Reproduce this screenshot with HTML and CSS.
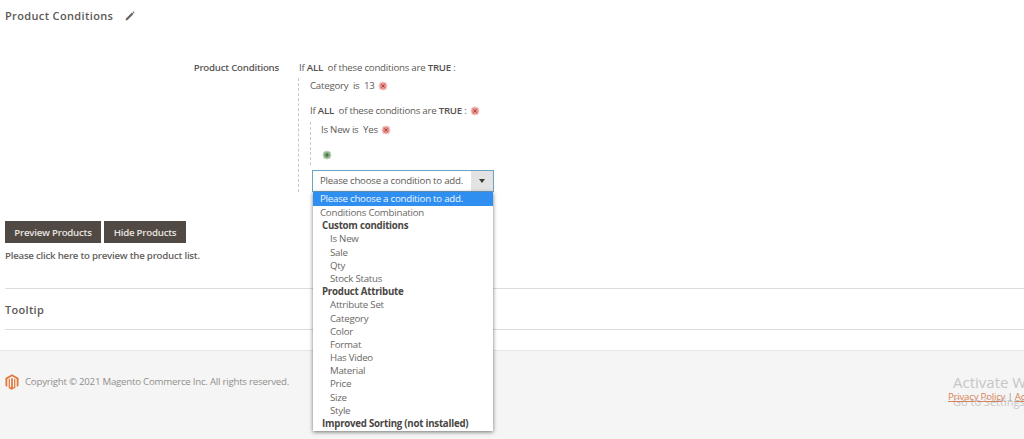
FILE: index.html
```html
<!DOCTYPE html>
<html lang="en">
<head>
<meta charset="utf-8">
<title>Product Conditions</title>
<link rel="stylesheet" href="styles.css">
</head>
<body>
<main class="content">
  <h2 class="section-title">Product Conditions
    <svg class="pencil" viewBox="0 0 10 10" width="10" height="10"><path d="M0.5 9.5 L1 7.4 L6.9 1.5 L8.5 3.1 L2.6 9 Z M7.5 0.9 L8.2 0.3 L9.7 1.8 L9.1 2.5 Z" fill="#6a6560"/></svg>
  </h2>
  <div class="field">
    <div class="field-label">Product Conditions</div>
    <div class="rules">
      <div class="rule-head">If <b>ALL</b>&nbsp; of these conditions are <b>TRUE</b> :</div>
      <div class="rule-group outer">
        <div class="rule-row first">Category&nbsp; is&nbsp; 13 <svg class="icon" viewBox="0 0 10 10"><use href="#rm"/></svg></div>
        <div class="rule-row second">If <b>ALL</b>&nbsp; of these conditions are <b>TRUE</b> : <svg class="icon" viewBox="0 0 10 10"><use href="#rm"/></svg></div>
        <div class="rule-group inner">
          <div class="rule-row">Is New is&nbsp; Yes <svg class="icon" viewBox="0 0 10 10"><use href="#rm"/></svg></div>
          <div class="add-row"><svg class="icon" viewBox="0 0 10 10"><circle cx="5" cy="5" r="4" fill="#8fb38b" stroke="#c0d6bd"/><path d="M5 3v4M3 5h4" stroke="#3c6a37" stroke-width="1.1"/></svg></div>
        </div>
        <div class="select-wrap">
          <div class="select-box">
            <span class="select-text">Please choose a condition to add.</span>
            <span class="select-btn"><i class="arrow"></i></span>
          </div>
          <ul class="options">
            <li class="opt selected">Please choose a condition to add.</li>
            <li class="opt">Conditions Combination</li>
            <li class="opt group">Custom conditions</li>
            <li class="opt sub">Is New</li>
            <li class="opt sub">Sale</li>
            <li class="opt sub">Qty</li>
            <li class="opt sub">Stock Status</li>
            <li class="opt group">Product Attribute</li>
            <li class="opt sub">Attribute Set</li>
            <li class="opt sub">Category</li>
            <li class="opt sub">Color</li>
            <li class="opt sub">Format</li>
            <li class="opt sub">Has Video</li>
            <li class="opt sub">Material</li>
            <li class="opt sub">Price</li>
            <li class="opt sub">Size</li>
            <li class="opt sub">Style</li>
            <li class="opt group">Improved Sorting (not installed)</li>
          </ul>
        </div>
      </div>
    </div>
  </div>
  <div class="actions">
    <button class="btn">Preview Products</button>
    <button class="btn">Hide Products</button>
  </div>
  <p class="hint">Please click here to preview the product list.</p>
  <h2 class="tooltip-title">Tooltip</h2>
</main>
<footer class="footer">
  <svg class="logo" viewBox="0 0 16 18" width="14" height="16"><path d="M8 0 L15.5 4.4 V13.4 L13.4 14.6 V5.6 L8 2.5 L2.6 5.6 V14.6 L0.5 13.4 V4.4 Z M7 4.9 L8 4.3 L9 4.9 V16.6 L8 18 L4.2 15.8 V5.9 L5.6 5.1 V14.6 L7 15.4 Z M9 16.6 V15.4 L10.4 14.6 V5.1 L11.8 5.9 V15.8 Z" fill="#e3763a"/></svg>
  <span class="copyright">Copyright © 2021 Magento Commerce Inc. All rights reserved.</span>
  <div class="watermark"><div class="wm-title">Activate Windows</div><div class="wm-sub">Go to Settings to activate Windows.</div></div>
  <div class="legal"><a class="legal-link">Privacy Policy</a> | <a class="legal-link">Account Activity</a></div>
</footer>
<svg class="defs" width="0" height="0"><defs><g id="rm"><circle cx="5" cy="5" r="4" fill="#ec928c" stroke="#f5c6c2"/><path d="M3.4 3.4l3.2 3.2M6.6 3.4l-3.2 3.2" stroke="#a04a45" stroke-width="1"/></g></defs></svg>
</body>
</html>
```
FILE: styles.css
```css
* { box-sizing: border-box; }
html, body { margin: 0; height: 439px; overflow: hidden; }
body { font-family: "Open Sans", sans-serif; font-size: 9.7px; letter-spacing: -.24px; color: #5e5a57; background: #fff; display: flex; flex-direction: column; }
.content { padding: 0 0 0 5px; height: 350px; flex: none; }
.section-title { margin: 0; height: 33px; padding-top: 8px; font-size: 11px; line-height: 16px; font-weight: 600; letter-spacing: .36px; color: #5c5855; }
.pencil { margin-left: 8px; vertical-align: -1px; }
.field { display: flex; margin-top: 27px; }
.field-label { width: 274px; text-align: right; font-weight: 600; line-height: 16px; color: #5c5855; }
.rules { margin-left: 20px; width: 220px; }
.rule-head { line-height: 16px; white-space: nowrap; }
b { font-weight: 600; color: #55514e; }
.rule-group { position: relative; border-left: 1px dashed #c8c8c8; }
.rule-group.outer { margin: 2px 0 0 -1px; padding-left: 11px; }
.rule-row { line-height: 16px; white-space: nowrap; display: block; }
.rule-row.second { margin-top: 8px; padding-top: 1px; margin-bottom: 2px; }
.rule-group.inner { margin-top: 3px; height: 43px; padding-left: 10px; }
.add-row { margin-top: 12px; height: 11px; line-height: 11px; display: flex; }
.icon { width: 10px; height: 10px; vertical-align: -2px; margin-left: 1px; }
.select-wrap { position: relative; width: 182px; margin: 5px 0 0 2px; }
.select-box { height: 22px; border: 1px solid #6aa3c6; display: flex; background: #fff; }
.select-text { flex: 1; padding-left: 7px; line-height: 20px; white-space: nowrap; }
.select-btn { width: 22px; background: #e3e3e3; display: flex; align-items: center; justify-content: center; }
.arrow { width: 0; height: 0; border: 3px solid transparent; border-top: 4px solid #3e3a37; border-bottom: 0; }
.options { position: absolute; left: 1px; top: 22px; width: 180px; height: 239px; margin: 0; padding: 0; list-style: none; background: #fff; box-shadow: 0 1px 4px rgba(0,0,0,.55); z-index: 2; }
.opt { height: 13.2px; line-height: 13.2px; padding-left: 7px; color: #6b6764; white-space: nowrap; }
.opt.selected { background: #2f8ff0; color: #eef6ff; height: 14px; line-height: 14px; }
.opt.group { font-weight: 700; color: #4a4643; padding-left: 9px; }
.opt.sub { padding-left: 17px; }
.actions { display: flex; gap: 3px; margin-top: 29px; }
.btn { height: 22px; border: 0; padding: 0; background: #514943; color: #e8e4e0; font-family: inherit; font-size: 9.7px; letter-spacing: -.24px; font-weight: 600; }
.btn:first-child { width: 96px; }
.btn:last-child { width: 82px; }
.hint { margin: 5px 0 0; line-height: 16px; font-weight: 600; color: #65615e; }
.tooltip-title { margin: 24px 0 0; height: 42px; border-top: 1px solid #dcdcdc; border-bottom: 1px solid #dcdcdc; font-size: 11px; font-weight: 600; letter-spacing: .3px; line-height: 41px; color: #5c5855; }
.footer { position: relative; flex: 1; background: #f5f5f5; border-top: 1px solid #e6e6e6; padding: 23px 0 0 5px; display: flex; align-items: flex-start; overflow: hidden; }
.logo { flex: none; }
.copyright { margin-left: 6px; line-height: 16px; color: #938f8c; white-space: nowrap; }
.watermark { position: absolute; left: 953px; top: 21px; white-space: nowrap; color: #c6c6c6; letter-spacing: 0; }
.wm-title { font-size: 15px; line-height: 20px; }
.wm-sub { font-size: 11px; line-height: 13px; margin-top: 3px; }
.legal { position: absolute; left: 948px; top: 39px; line-height: 14px; color: #938f8c; white-space: nowrap; }
.legal-link { color: #d9825a; text-decoration: underline; }
.defs { position: absolute; }
```
